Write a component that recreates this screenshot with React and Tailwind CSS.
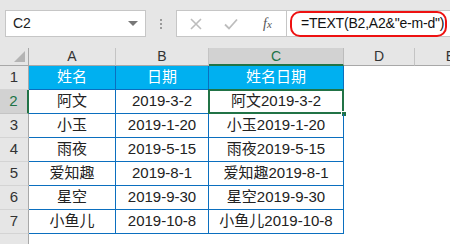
import React from 'react';

const rows = [
  ['阿文', '2019-3-2'],
  ['小玉', '2019-1-20'],
  ['雨夜', '2019-5-15'],
  ['爱知趣', '2019-8-1'],
  ['星空', '2019-9-30'],
  ['小鱼儿', '2019-10-8'],
];

const colHeads = ['A', 'B', 'C', 'D', 'E'];

const App = () => {
  return (
    <div
      className="w-[450px] h-[244px] overflow-hidden bg-white text-[#222]"
      style={{ fontFamily: '"Liberation Sans", "Noto Sans CJK SC", sans-serif' }}
    >
      {/* formula bar */}
      <div className="h-[48px] bg-[#e6e6e6] flex items-start pt-[10px]">
        <div className="ml-[5px] w-[141px] h-[27px] bg-white border border-[#c6c6c6] flex items-center justify-between pl-[7px] pr-[7px]">
          <span className="text-[14px] text-[#222]">C2</span>
          <span className="w-0 h-0 border-l-[5px] border-r-[5px] border-t-[5px] border-l-transparent border-r-transparent border-t-[#777]" />
        </div>
        <div className="w-[30px] h-[27px] flex flex-col items-center justify-center gap-[2px]">
          <span className="w-[2px] h-[2px] bg-[#9a9a9a]" />
          <span className="w-[2px] h-[2px] bg-[#9a9a9a]" />
          <span className="w-[2px] h-[2px] bg-[#9a9a9a]" />
        </div>
        <div className="flex-1 h-[27px] bg-white border border-r-0 border-[#c6c6c6] flex items-center">
          <div className="w-[110px] h-full flex items-center border-r border-[#c6c6c6]">
            <svg width="12" height="12" viewBox="0 0 12 12" className="ml-[13px]">
              <path d="M1 1L11 11M11 1L1 11" stroke="#bdbdbd" strokeWidth="1.6" />
            </svg>
            <svg width="14" height="12" viewBox="0 0 14 12" className="ml-[22px]">
              <path d="M1 6.5L5 10.5L13 1.5" stroke="#bdbdbd" strokeWidth="1.8" fill="none" />
            </svg>
            <span
              className="ml-[25px] text-[14px] italic text-[#555]"
              style={{ fontFamily: '"Liberation Serif", serif' }}
            >
              f<span className="text-[11px]">x</span>
            </span>
          </div>
          <div className="ml-[3px] w-[157px] h-[26px] rounded-[10px] border-2 border-[#ee1111] flex items-center pl-[9px] text-[14px] text-[#111] tracking-[-0.2px] whitespace-nowrap">
            =TEXT(B2,A2&amp;"e-m-d")
          </div>
        </div>
      </div>

      {/* sheet grid */}
      <div className="grid grid-cols-[29px_87px_93px_135px_71px_72px] grid-rows-[18px_repeat(8,24px)]">
        {/* column headers */}
        <div className="relative bg-[#e6e6e6] border-r border-b border-[#a8a8a8]">
          <span
            className="absolute right-[3px] bottom-[3px] w-0 h-0"
            style={{ borderBottom: '11px solid #b4b4b4', borderLeft: '11px solid transparent' }}
          />
        </div>
        {colHeads.map((c) =>
          c === 'C' ? (
            <div
              key={c}
              className="bg-[#d2d2d2] border-r border-[#bcbcbc] border-b-2 border-b-[#217346] flex items-center justify-center text-[14px] text-[#217346]"
            >
              {c}
            </div>
          ) : (
            <div
              key={c}
              className="bg-[#e6e6e6] border-r border-[#c4c4c4] border-b border-b-[#a8a8a8] flex items-center justify-center text-[14px] text-[#333]"
            >
              {c}
            </div>
          )
        )}

        {/* row 1 */}
        <div className="bg-[#e6e6e6] border-r border-r-[#a8a8a8] border-b border-b-[#d4d4d4] flex items-center justify-center text-[15px] text-[#333]">
          1
        </div>
        {['姓名', '日期', '姓名日期'].map((t) => (
          <div
            key={t}
            className="bg-[#00b0f0] border-r border-b border-[#0b6fbf] flex items-center justify-center text-[15px] text-white"
          >
            {t}
          </div>
        ))}
        <div />
        <div />

        {/* data rows */}
        {rows.map(([name, date], i) => {
          const sel = i === 0;
          return (
            <React.Fragment key={name}>
              <div
                className={
                  sel
                    ? 'bg-[#d2d2d2] border-r-2 border-r-[#217346] border-b border-b-[#c4c4c4] flex items-center justify-center text-[15px] text-[#217346]'
                    : 'bg-[#e6e6e6] border-r border-r-[#a8a8a8] border-b border-b-[#d4d4d4] flex items-center justify-center text-[15px] text-[#333]'
                }
              >
                {i + 2}
              </div>
              <div className="border-r border-b border-[#0b6fbf] flex items-center justify-center text-[15px]">
                {name}
              </div>
              <div className="border-r border-b border-[#0b6fbf] flex items-center justify-center text-[15px]">
                {date}
              </div>
              <div className="relative border-r border-b border-[#0b6fbf] flex items-center justify-center text-[15px] whitespace-nowrap">
                {name}
                {date}
                {sel && (
                  <>
                    <span className="absolute left-[-1px] top-[-1px] right-[-1px] bottom-[-1px] border-2 border-[#217346]" />
                    <span className="absolute right-[-4px] bottom-[-4px] w-[6px] h-[6px] bg-[#217346] border border-white" />
                  </>
                )}
              </div>
              <div />
              <div />
            </React.Fragment>
          );
        })}

        {/* row 8 header, cut off by the window */}
        <div className="bg-[#e6e6e6] border-r border-r-[#a8a8a8]" />
      </div>
    </div>
  );
};

export default App;
